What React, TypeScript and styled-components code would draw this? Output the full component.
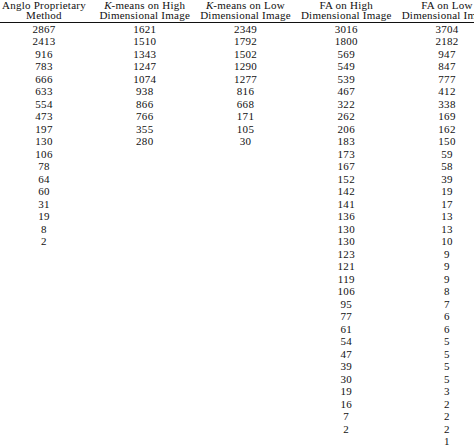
import React from "react";
import styled, { createGlobalStyle } from "styled-components";

const GlobalStyle = createGlobalStyle`
  html, body {
    margin: 0;
    padding: 0;
    background: #ffffff;
    overflow: hidden;
  }
  body {
    font-family: "Liberation Serif", "Times New Roman", serif;
    color: #111;
  }
`;

const Page = styled.div`
  width: 474px;
  height: 448px;
  overflow: hidden;
  position: relative;
`;

const Table = styled.div`
  margin-left: -6.4px;
  margin-top: -0.5px;
  width: 520px;
  display: flex;
  flex-direction: column;
`;

const HeaderRow = styled.div`
  display: grid;
  grid-template-columns: repeat(5, 100.75px);
  border-bottom: 1.4px solid #111;
  padding-bottom: 1.2px;
`;

const HeaderCell = styled.div`
  font-size: 11px;
  line-height: 10.5px;
  text-align: center;
  letter-spacing: 0.25px;
  white-space: nowrap;
`;

const Body = styled.div`
  display: grid;
  grid-template-columns: repeat(5, 100.75px);
  padding-top: 0.3px;
`;

const Column = styled.div`
  display: flex;
  flex-direction: column;
  align-items: center;
`;

const Cell = styled.div`
  font-size: 11px;
  line-height: 12.5px;
  height: 12.5px;
  letter-spacing: 0.3px;
`;

const K = styled.i`
  font-style: italic;
  letter-spacing: 0;
`;

const columns: number[][] = [
  [2867, 2413, 916, 783, 666, 633, 554, 473, 197, 130, 106, 78, 64, 60, 31, 19, 8, 2],
  [1621, 1510, 1343, 1247, 1074, 938, 866, 766, 355, 280],
  [2349, 1792, 1502, 1290, 1277, 816, 668, 171, 105, 30],
  [
    3016, 1800, 569, 549, 539, 467, 322, 262, 206, 183, 173, 167, 152, 142, 141, 136, 130,
    130, 123, 121, 119, 106, 95, 77, 61, 54, 47, 39, 30, 19, 16, 7, 2,
  ],
  [
    3704, 2182, 947, 847, 777, 412, 338, 169, 162, 150, 59, 58, 39, 19, 17, 13, 13, 10, 9, 9,
    9, 8, 7, 6, 6, 5, 5, 5, 5, 3, 2, 2, 2, 1,
  ],
];

const App: React.FC = () => {
  return (
    <Page>
      <GlobalStyle />
      <Table>
        <HeaderRow>
          <HeaderCell>
            Anglo Proprietary
            <br />
            Method
          </HeaderCell>
          <HeaderCell>
            <K>K</K>-means on High
            <br />
            Dimensional Image
          </HeaderCell>
          <HeaderCell>
            <K>K</K>-means on Low
            <br />
            Dimensional Image
          </HeaderCell>
          <HeaderCell>
            FA on High
            <br />
            Dimensional Image
          </HeaderCell>
          <HeaderCell>
            FA on Low
            <br />
            Dimensional Image
          </HeaderCell>
        </HeaderRow>
        <Body>
          {columns.map((col, key) => (
            <Column key={key}>
              {col.map((value, i) => (
                <Cell key={i}>{value}</Cell>
              ))}
            </Column>
          ))}
        </Body>
      </Table>
    </Page>
  );
};

export default App;
